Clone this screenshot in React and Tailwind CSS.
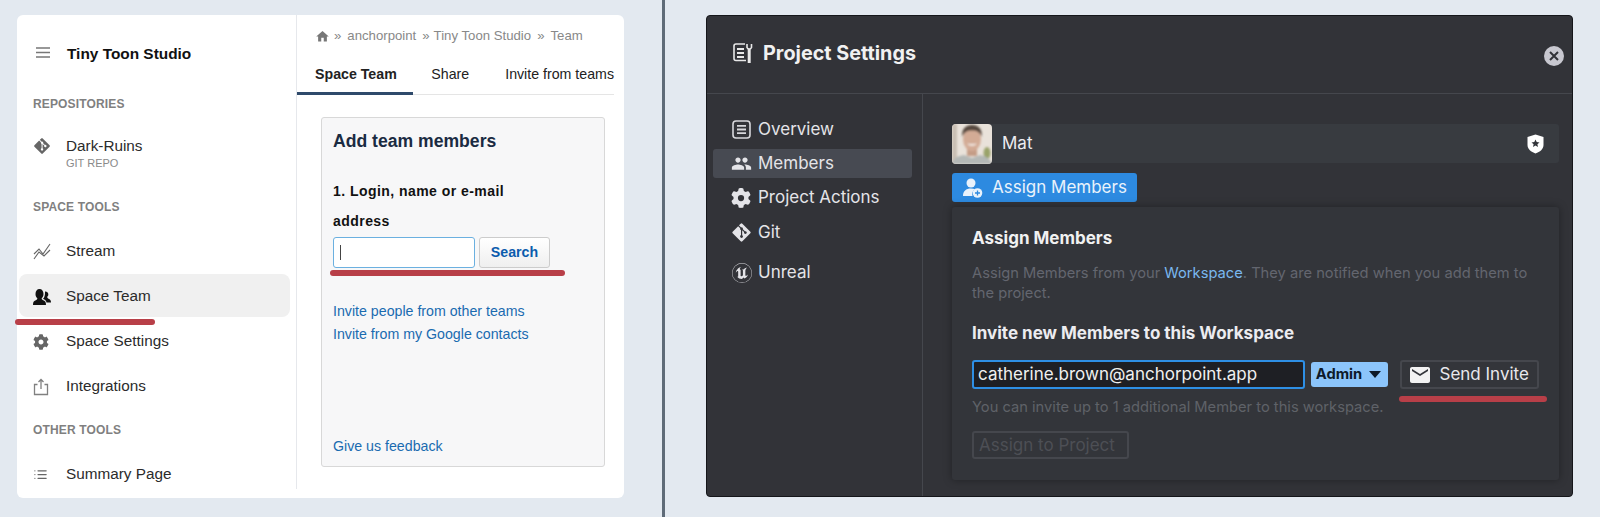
import React from 'react';
import { FaGitAlt, FaCog } from 'react-icons/fa';
import { FaGear } from 'react-icons/fa6';
import { SiUnrealengine } from 'react-icons/si';
import { MdHome, MdPeople, MdEmail } from 'react-icons/md';
import { FiList } from 'react-icons/fi';

const sans = "font-['Liberation_Sans',Arial,sans-serif]";

const Hamburger = () => (
  <svg width="15" height="11" viewBox="0 0 15 11" className="text-[#777] -mt-[4px] ml-[1px]" stroke="currentColor" strokeWidth="1.5">
    <path d="M0 1h14M0 5.500h14M0 10h14" />
  </svg>
);

const ShareBox = () => (
  <svg width="16" height="18" viewBox="0 0 16 18" fill="none" stroke="#808080" strokeWidth="1.3">
    <path d="M4.500 6.500H1.500v10h13v-10h-3M8 11V1.500M5.500 4 8 1.500 10.500 4" />
  </svg>
);

const StreamIcon = () => (
  <svg width="18" height="17" viewBox="0 0 18 17" fill="none" stroke="#666" strokeWidth="1.1">
    <path d="M1 11l5-5 4 5 7-10" />
    <path d="M1 16l5-7 5 4 6-6" />
  </svg>
);

const TeamIcon = () => (
  <svg width="18" height="16" viewBox="0 0 18 16" fill="#111">
    <path d="M12.500 2.500a3 3 0 0 1 1.800 5.300c-.2 1 .4 1.600 1.700 2.200 1.300.6 2 1.400 2 3.500h-4.500c-.3-2-1.500-3-3.500-3.800.5-.4 1-.9 1.200-1.500.8-1.700.8-3.800.8-5.700z" />
    <path d="M6.500 0C9 0 10.500 2 10.500 5c0 2-.8 3.500-1.800 4.300-.2 1 .6 1.600 2 2.200 1.400.6 2.300 1.500 2.300 4.500H0c0-3 .9-3.900 2.300-4.500 1.400-.6 2.200-1.200 2-2.200C3.300 8.500 2.500 7 2.500 5c0-3 1.500-5 4-5z" />
  </svg>
);

const SideRow = ({ icon, label, active }) => (
  <div className={`mx-[2px] h-[45px] flex items-center ${active ? '' : 'pl-[14px]'}`}>
    <div className={`flex items-center h-[43px] ${active ? 'w-[271px] mb-[2px] pt-[2px] bg-[#f0f0f0] rounded-lg pl-[14px]' : 'w-full'}`}>
      <div className="w-[33px] flex items-center">{icon}</div>
      <span className="text-[15.300px] text-[#2b2b2b]">{label}</span>
    </div>
  </div>
);

const SideHeading = ({ children, className = '' }) => (
  <div className={`h-[26px] pl-[16px] flex items-center text-[12px] font-bold tracking-[0.15px] text-[#808080] ${className}`}>
    {children}
  </div>
);

const LeftSidebar = () => (
  <aside className="w-[280px] h-[474px] border-r border-[#e6e8ec] shrink-0">
    <div className="h-[76px] flex items-center pl-[18px] pt-[2px]">
      <Hamburger />
      <span className="ml-[16px] text-[15.400px] font-bold text-[#111]">Tiny Toon Studio</span>
    </div>
    <SideHeading>REPOSITORIES</SideHeading>
    <div className="h-[77px] pl-[16px] pt-[19px] flex">
      <div className="w-[33px] pt-[1px]"><FaGitAlt className="w-[18px] h-[18px] text-[#666]" /></div>
      <div>
        <div className="text-[15.300px] leading-[20px] text-[#2b2b2b]">Dark-Ruins</div>
        <div className="text-[11px] leading-[14px] text-[#8a8a8a]">GIT REPO</div>
      </div>
    </div>
    <SideHeading>SPACE TOOLS</SideHeading>
    <div className="mt-[9px]">
      <SideRow icon={<StreamIcon />} label="Stream" />
      <SideRow active icon={<TeamIcon />} label="Space Team" />
      <SideRow icon={<FaCog className="w-[16px] h-[16px] text-[#666]" />} label="Space Settings" />
      <SideRow icon={<ShareBox />} label="Integrations" />
    </div>
    <SideHeading className="mt-[8px]">OTHER TOOLS</SideHeading>
    <div className="mt-[9px]">
      <SideRow icon={<FiList className="w-[15px] h-[15px] text-[#666]" />} label="Summary Page" />
    </div>
  </aside>
);

const TeamMain = () => (
  <main className="flex-1 relative">
    <div className="h-[40px] pl-[18px] pt-[2px] flex items-center text-[13.200px] text-[#888]">
      <MdHome className="w-[15px] h-[15px] text-[#777]" />
      <span className="ml-[4px]">»</span>
      <span className="ml-[6px]">anchorpoint</span>
      <span className="ml-[6px]">»</span>
      <span className="ml-[4px]">Tiny Toon Studio</span>
      <span className="ml-[6px]">»</span>
      <span className="ml-[6px]">Team</span>
    </div>
    <div className="w-[317px] h-[40px] border-b border-[#e5e5e5] flex text-[14.200px] text-[#222] whitespace-nowrap">
      <div className="w-[117px] h-[40px] border-b-[3px] border-[#2f4a6b] pl-[18px] pt-[9px] font-bold text-[#222]">Space Team</div>
      <div className="ml-[18px] pt-[9px]">Share</div>
      <div className="ml-[36px] pt-[9px]">Invite from teams</div>
    </div>
    <section className="ml-[24px] mt-[22px] w-[284px] h-[350px] bg-[#f7f7f8] border border-[#d8d8d8] rounded-[3px] pl-[11px] flex flex-col">
      <h2 className="mt-[11px] text-[17.600px] leading-[24px] font-bold text-[#1a2b42]">Add team members</h2>
      <div className="mt-[23px] text-[14px] leading-[30px] font-bold tracking-[0.45px] text-[#111]">
        1. Login, name or e-mail<br />address
      </div>
      <div className="mt-[1px] flex gap-[4px]">
        <div className="w-[142px] h-[31px] bg-white border border-[#6bb0e0] rounded-[3px] flex items-center pl-[6px]">
          <div className="w-px h-[15px] bg-[#444]" />
        </div>
        <button className="w-[71px] h-[31px] border border-[#ccc] rounded-[3px] bg-gradient-to-b from-white to-[#efefef] text-[14.200px] font-bold text-[#0b5cad]">Search</button>
      </div>
      <div className="mt-[32px] text-[14.200px] leading-[23px] text-[#1a6bb0]">
        <div>Invite people from other teams</div>
        <div>Invite from my Google contacts</div>
      </div>
      <div className="mt-auto mb-[10px] text-[14.200px] leading-[20px] text-[#1a6bb0]">Give us feedback</div>
    </section>
  </main>
);

const SettingsIcon = () => (
  <svg width="20" height="21" viewBox="0 0 20 21" fill="none" stroke="#e8e8e8">
    <path d="M13 17.500H3a2 2 0 0 1-2-2V3a2 2 0 0 1 2-2h9" strokeWidth="1.600" />
    <path d="M4 6h7M4 10h7M4 14h7" strokeWidth="2" />
    <path d="M14 1v3.500a2.400 2.400 0 0 0 4.500 0V1" strokeWidth="1.600" />
    <path d="M16.200 6v14" strokeWidth="3" />
  </svg>
);

const OverviewIcon = () => (
  <svg width="19" height="19" viewBox="0 0 19 19" fill="none" stroke="#d8d8dc">
    <rect x="1" y="1" width="17" height="17" rx="3" strokeWidth="1.600" />
    <path d="M5 5.800h9M5 9.500h9M5 13.200h9" strokeWidth="1.800" />
  </svg>
);

const AssignIcon = () => (
  <svg width="21" height="20" viewBox="0 0 21 20" fill="#e9f2fb">
    <circle cx="9" cy="5" r="4.500" />
    <path d="M1 18c0-5 3-7.500 8-7.500 1.600 0 3 .3 4 .8a6 6 0 0 0-2.500 6.700z" />
    <circle cx="15.500" cy="15" r="4.800" />
    <path d="M15.500 12.500v5M13 15h5" stroke="#2d8ae0" strokeWidth="1.300" />
  </svg>
);

const ShieldStar = () => (
  <svg width="17" height="20" viewBox="0 0 17 20">
    <path d="M8.500 0.500 16.500 3v8c0 4-3.500 7-8 8.500C4 18 .5 15 .5 11V3z" fill="#fff" />
    <path d="m8.500 5.500 1.200 2.600 2.800.3-2.100 1.900.6 2.800-2.500-1.500-2.500 1.500.6-2.800-2.100-1.900 2.800-.3z" fill="#33353a" />
  </svg>
);

// small stand-in for the member's photo
const Avatar = () => (
  <svg width="40" height="40" viewBox="0 0 40 40" className="rounded-[4px] shrink-0">
    <defs>
      <filter id="soft"><feGaussianBlur stdDeviation="0.800" /></filter>
    </defs>
    <rect width="40" height="40" fill="#e9e2da" />
    <g filter="url(#soft)">
      <rect x="0" y="0" width="5" height="40" fill="#c9bfb4" />
      <ellipse cx="35" cy="29" rx="3.500" ry="6" fill="#9aa36a" />
      <path d="M0 40c1-6 6-8 12-9l8 3 8-3c5 1 10 3 12 9z" fill="#b4b8b6" />
      <rect x="15" y="24" width="10" height="8" fill="#c49c86" />
      <ellipse cx="20" cy="15" rx="9" ry="12" fill="#d3ab95" />
      <path d="M10.500 13C9 5 14 1 20 1s11 4 9.500 12C28 8 25 6.500 20 6.500S12 8 10.500 13z" fill="#54463c" />
      <path d="M15 19.500c2 3 8 3 10 0-2 .8-8 .8-10 0z" fill="#f7f1ec" />
    </g>
  </svg>
);

const NavRow = ({ icon, label, active, className = '' }) => (
  <div className={`h-[29px] ml-[6px] w-[199px] pl-[19px] flex items-center rounded-[3px] ${active ? 'bg-[#474a52]' : ''} ${className}`}>
    <div className="w-[26px] flex items-center">{icon}</div>
    <span className="text-[17px] text-[#e4e4e8]">{label}</span>
  </div>
);

const SettingsPanel = () => (
  <div className="relative ml-[41px] w-[867px] h-[482px] bg-[#323338] border border-[#15161a] rounded-[4px] flex flex-col font-['Inter',sans-serif]">
    <header className="h-[78px] border-b border-[#45474d] flex items-center pl-[26px] pb-[2px] shrink-0">
      <SettingsIcon />
      <span className="ml-[10px] text-[19.800px] font-bold text-[#f1f1f1]">Project Settings</span>
    </header>
    <button className="absolute left-[837px] top-[30px] w-[20px] h-[20px] rounded-full bg-[#c8c8d0] flex items-center justify-center">
      <svg width="10" height="10" viewBox="0 0 10 10" stroke="#323338" strokeWidth="2"><path d="M1 1l8 8M9 1l-8 8" /></svg>
    </button>
    <div className="flex flex-1">
      <nav className="w-[216px] border-r border-[#45474d] pt-[21px] shrink-0 -mr-[1px]">
        <NavRow label="Overview" className="mb-[5px]" icon={<OverviewIcon />} />
        <NavRow active label="Members" className="mb-[5px]" icon={<MdPeople className="w-[21px] h-[21px] -ml-[1px] text-[#e4e4e8]" />} />
        <NavRow label="Project Actions" className="mb-[6px]" icon={<FaGear className="w-[20px] h-[20px] -ml-[1px] text-[#e4e4e8]" />} />
        <NavRow label="Git" className="mb-[11px]" icon={<FaGitAlt className="w-[21px] h-[21px] -ml-[1px] text-[#e4e4e8]" />} />
        <NavRow label="Unreal" icon={<SiUnrealengine className="w-[20px] h-[20px] text-[#e4e4e8]" />} />
      </nav>
      <div className="ml-[30px] w-[607px] pt-[30px]">
        <div className="h-[39px] bg-[#383b40] rounded-[3px] flex items-center pr-[15px]">
          <Avatar />
          <span className="ml-[10px] pt-[1px] text-[17px] text-[#ececf0]">Mat</span>
          <div className="ml-auto"><ShieldStar /></div>
        </div>
        <button className="mt-[10px] w-[185px] h-[29px] bg-[#2d8ae0] rounded-[3px] flex items-center pl-[10px] text-[17px] text-[#e9f2fb]">
          <AssignIcon />
          <span className="ml-[9px]">Assign Members</span>
        </button>
        <section className="mt-[5px] h-[273px] bg-[#33353a] rounded-[3px] shadow-[0_0_8px_rgba(0,0,0,0.35)] px-[20px] pt-[19px]">
          <h3 className="text-[17px] leading-[24px] font-bold text-[#f1f1f1]">Assign Members</h3>
          <p className="mt-[13px] text-[14.700px] leading-[20px] text-[#63666f]">
            Assign Members from your <span className="text-[#7ab8ef]">Workspace</span>. They are notified when you add them to<br />the project.
          </p>
          <h3 className="mt-[18px] text-[17px] leading-[24px] font-bold text-[#ececf0]">Invite new Members to this Workspace</h3>
          <div className="mt-[15px] flex items-center">
            <div className="w-[334px] h-[29px] bg-[#1e1f24] border-2 border-[#2e8fe5] rounded-[3px] flex items-center pl-[4px] text-[17px] text-[#f0f0f0]">catherine.brown@anchorpoint.app</div>
            <div className="ml-[6px] w-[77px] h-[25px] bg-[#8cc5fb] rounded-[3px] flex items-center pl-[5px] text-[14.700px] font-bold text-[#0d1a2a]">
              Admin
              <svg width="12" height="7" viewBox="0 0 12 7" className="ml-[7px]" fill="#0d1a2a"><path d="M0 0h12L6 7z" /></svg>
            </div>
            <button className="ml-[12px] w-[140px] h-[29px] border-2 border-[#45474d] rounded-[3px] flex items-center pl-[6px] text-[17px] text-[#e8e8ec]">
              <MdEmail className="w-[24px] h-[24px] text-[#f2f2f2]" />
              <span className="ml-[8px]">Send Invite</span>
            </button>
          </div>
          <p className="mt-[8px] text-[14.700px] leading-[20px] text-[#5f6268]">You can invite up to 1 additional Member to this workspace.</p>
          <button className="mt-[14px] w-[157px] h-[28px] border-2 border-[#45474d] rounded-[3px] pl-[5px] text-left text-[17px] text-[#4d4f55]">Assign to Project</button>
        </section>
      </div>
    </div>
  </div>
);

export default function App() {
  return (
    <div className={`relative w-[1600px] h-[517px] bg-[#e3e9f0] flex pt-[15px] overflow-hidden ${sans}`}>
      <div className="ml-[17px] w-[607px] h-[483px] bg-white rounded-[6px] flex shrink-0">
        <LeftSidebar />
        <TeamMain />
      </div>
      <div className="ml-[38px] -mt-[15px] w-[3px] h-[517px] bg-[#5f6b78] shrink-0" />
      <SettingsPanel />
      {/* red annotation strokes drawn over the screenshot */}
      <div className="absolute left-[15px] top-[319px] w-[140px] h-[6px] rounded-full bg-[#b83f48]" />
      <div className="absolute left-[330px] top-[270px] w-[235px] h-[6px] rounded-full bg-[#b83f48]" />
      <div className="absolute left-[1399px] top-[396px] w-[148px] h-[6px] rounded-full bg-[#b83f48]" />
    </div>
  );
}
